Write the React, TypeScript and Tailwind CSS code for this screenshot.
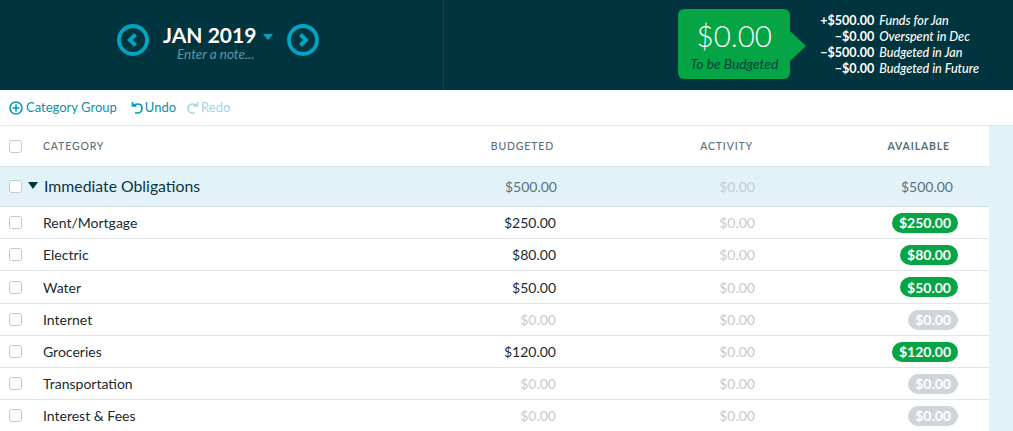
function cx(...parts: Array<string | false | null | undefined>) {
  return parts.filter(Boolean).join(" ");
}

const rows = [
  { name: "Rent/Mortgage", budgeted: "$250.00", available: "$250.00", h: "h-[32px]" },
  { name: "Electric", budgeted: "$80.00", available: "$80.00", h: "h-[32px]" },
  { name: "Water", budgeted: "$50.00", available: "$50.00", h: "h-[33px]" },
  { name: "Internet", budgeted: "$0.00", available: "$0.00", h: "h-[32px]" },
  { name: "Groceries", budgeted: "$120.00", available: "$120.00", h: "h-[32px]" },
  { name: "Transportation", budgeted: "$0.00", available: "$0.00", h: "h-[32px]" },
  { name: "Interest & Fees", budgeted: "$0.00", available: "$0.00", h: "h-[32px]" },
];

const summary = [
  { amount: "+$500.00", label: "Funds for Jan" },
  { amount: "−$0.00", label: "Overspent in Dec" },
  { amount: "−$500.00", label: "Budgeted in Jan" },
  { amount: "−$0.00", label: "Budgeted in Future" },
];

function Checkbox() {
  return <span className="block h-[13px] w-[13px] rounded-[3px] border border-[#c3c9cc] bg-white" />;
}

function MonthButton({ next }: { next?: boolean }) {
  return (
    <svg width="32" height="32" viewBox="0 0 32 32" fill="none" stroke="#00a5c1">
      <circle cx="16" cy="16" r="14" strokeWidth="3.8" />
      <path d={next ? "M13.500 10.500 19 16l-5.500 5.500" : "M18.500 10.500 13 16l5.500 5.500"} strokeWidth="4" />
    </svg>
  );
}

function Header() {
  return (
    <div className="flex h-[90px] bg-[#003540] text-white">
      <div className="flex w-[444px] justify-center border-r border-[#0e4450] pt-[24px] pr-[7px]">
        <div className="mr-[14px]">
          <MonthButton />
        </div>
        <div className="flex w-[113px] flex-col">
          <div className="flex items-center text-[21px] leading-[22px] font-bold">
            JAN 2019
            <span className="mt-[3px] ml-[7px] h-0 w-0 border-x-[5px] border-t-[6px] border-x-transparent border-t-[#00a5c1]" />
          </div>
          <div className="pl-[14px] text-[13.5px] leading-[17px] text-[#5c98a4] italic">Enter a note...</div>
        </div>
        <div className="ml-[11px]">
          <MonthButton next />
        </div>
      </div>
      <div className="flex flex-1 justify-end pt-[9px] pr-[34px]">
        <div className="relative mr-[28px] flex h-[70px] w-[112px] flex-col items-center rounded-[6px] bg-[#05a444]">
          <div className="mt-[8px] text-[29.5px] leading-[38px] font-light">$0.00</div>
          <div className="text-[13.8px] leading-[17px] text-[#00423f] italic">To be Budgeted</div>
          <span className="absolute top-[22px] -right-[16px] h-0 w-0 border-y-[15px] border-l-[16px] border-y-transparent border-l-[#05a444]" />
        </div>
        <div className="flex flex-col pt-[4px] text-[12.6px] leading-[16px]">
          {summary.map((item) => (
            <div key={item.label} className="flex">
              <span className="w-[56px] text-right font-bold whitespace-nowrap">{item.amount}</span>
              <span className="ml-[5px] font-medium whitespace-nowrap italic">{item.label}</span>
            </div>
          ))}
        </div>
      </div>
    </div>
  );
}

function Toolbar() {
  return (
    <div className="flex h-[36px] items-center border-b border-[#e3e6e8] pl-[9px] text-[13px] text-[#0d8fa8]">
      <svg width="14" height="14" viewBox="0 0 14 14" fill="none" stroke="#009cb8" strokeWidth="1.6">
        <circle cx="7" cy="7" r="6" />
        <path d="M7 3.600v6.800M3.600 7h6.800" />
      </svg>
      <span className="ml-[3px]">Category Group</span>
      <svg className="ml-[14px]" width="13" height="14" viewBox="0 0 13 14" fill="none" stroke="#009cb8" strokeWidth="1.7">
        <path d="M1.500 1v4h4M1.500 5C3 3.800 4.500 3 6.500 3c2.800 0 4.500 2 4.500 4.500S9 12 6.500 12H4" />
      </svg>
      <span className="ml-[1px]">Undo</span>
      <svg className="ml-[10px]" width="13" height="14" viewBox="0 0 13 14" fill="none" stroke="#a5d8e3" strokeWidth="1.7">
        <path d="M11.500 1v4h-4M11.500 5C10 3.800 8.500 3 6.500 3 3.700 3 2 5 2 7.500S4 12 6.500 12H9" />
      </svg>
      <span className="ml-[2px] text-[#a3d4df]">Redo</span>
    </div>
  );
}

function Row({ className, name, budgeted, activity, available }: {
  className: string;
  name: React.ReactNode;
  budgeted: React.ReactNode;
  activity: React.ReactNode;
  available: React.ReactNode;
}) {
  return (
    <div className={cx("flex items-center", className)}>
      <div className="w-[43px] pl-[9px]">
        <Checkbox />
      </div>
      <div className="flex-1">{name}</div>
      <div className="w-[120px] text-right">{budgeted}</div>
      <div className="w-[198px] text-right">{activity}</div>
      <div className="flex w-[204px] justify-end pr-[1px]">{available}</div>
      <div className="w-[30px]" />
    </div>
  );
}

function Money({ value }: { value: string }) {
  return <span className={value === "$0.00" ? "text-[#c5cbce]" : "text-[#1a2b30]"}>{value}</span>;
}

function Pill({ value }: { value: string }) {
  return (
    <span
      className={cx(
        "flex h-[20px] items-center rounded-full px-[7px] text-[14px] font-bold text-white",
        value === "$0.00" ? "bg-[#cfd5d8]" : "bg-[#05a444]"
      )}
    >
      {value}
    </span>
  );
}

export default function App() {
  return (
    <div className="h-[431px] w-[1013px] overflow-hidden bg-white font-['Lato','Liberation_Sans',sans-serif]">
      <Header />
      <Toolbar />
      <div className="flex">
        <div className="w-[989px]">
          <Row
            className="h-[41px] border-b border-[#dfe4e6] pt-[1px] text-[10.5px] font-medium tracking-[0.08em] text-[#587079]"
            name="CATEGORY"
            budgeted={<span className="relative right-[3px]">BUDGETED</span>}
            activity={<span className="relative right-[2px]">ACTIVITY</span>}
            available={<span className="relative right-[8px] font-bold">AVAILABLE</span>}
          />
          <Row
            className="h-[40px] border-b border-[#d5dde0] bg-[#e1f3f9] text-[14px] text-[#5a7079]"
            name={
              <span className="relative -top-[1px] -ml-[15px] flex items-center text-[15.8px] text-[#0a3540]">
                <span className="mr-[6px] h-0 w-0 border-x-[5px] border-t-[7px] border-x-transparent border-t-[#003540]" />
                Immediate Obligations
              </span>
            }
            budgeted="$500.00"
            activity={<span className="text-[#c5cbce]">$0.00</span>}
            available={<span className="relative right-[5px]">$500.00</span>}
          />
          {rows.map((row) => (
            <Row
              key={row.name}
              className={cx(row.h, "border-b border-[#e1e5e7] text-[14px] text-[#1a2b30]")}
              name={row.name}
              budgeted={<span className="relative right-[1px]"><Money value={row.budgeted} /></span>}
              activity={<span className="text-[#c5cbce]">$0.00</span>}
              available={<Pill value={row.available} />}
            />
          ))}
        </div>
        <div className="flex-1 bg-[#e1f3f9]" />
      </div>
    </div>
  );
}
